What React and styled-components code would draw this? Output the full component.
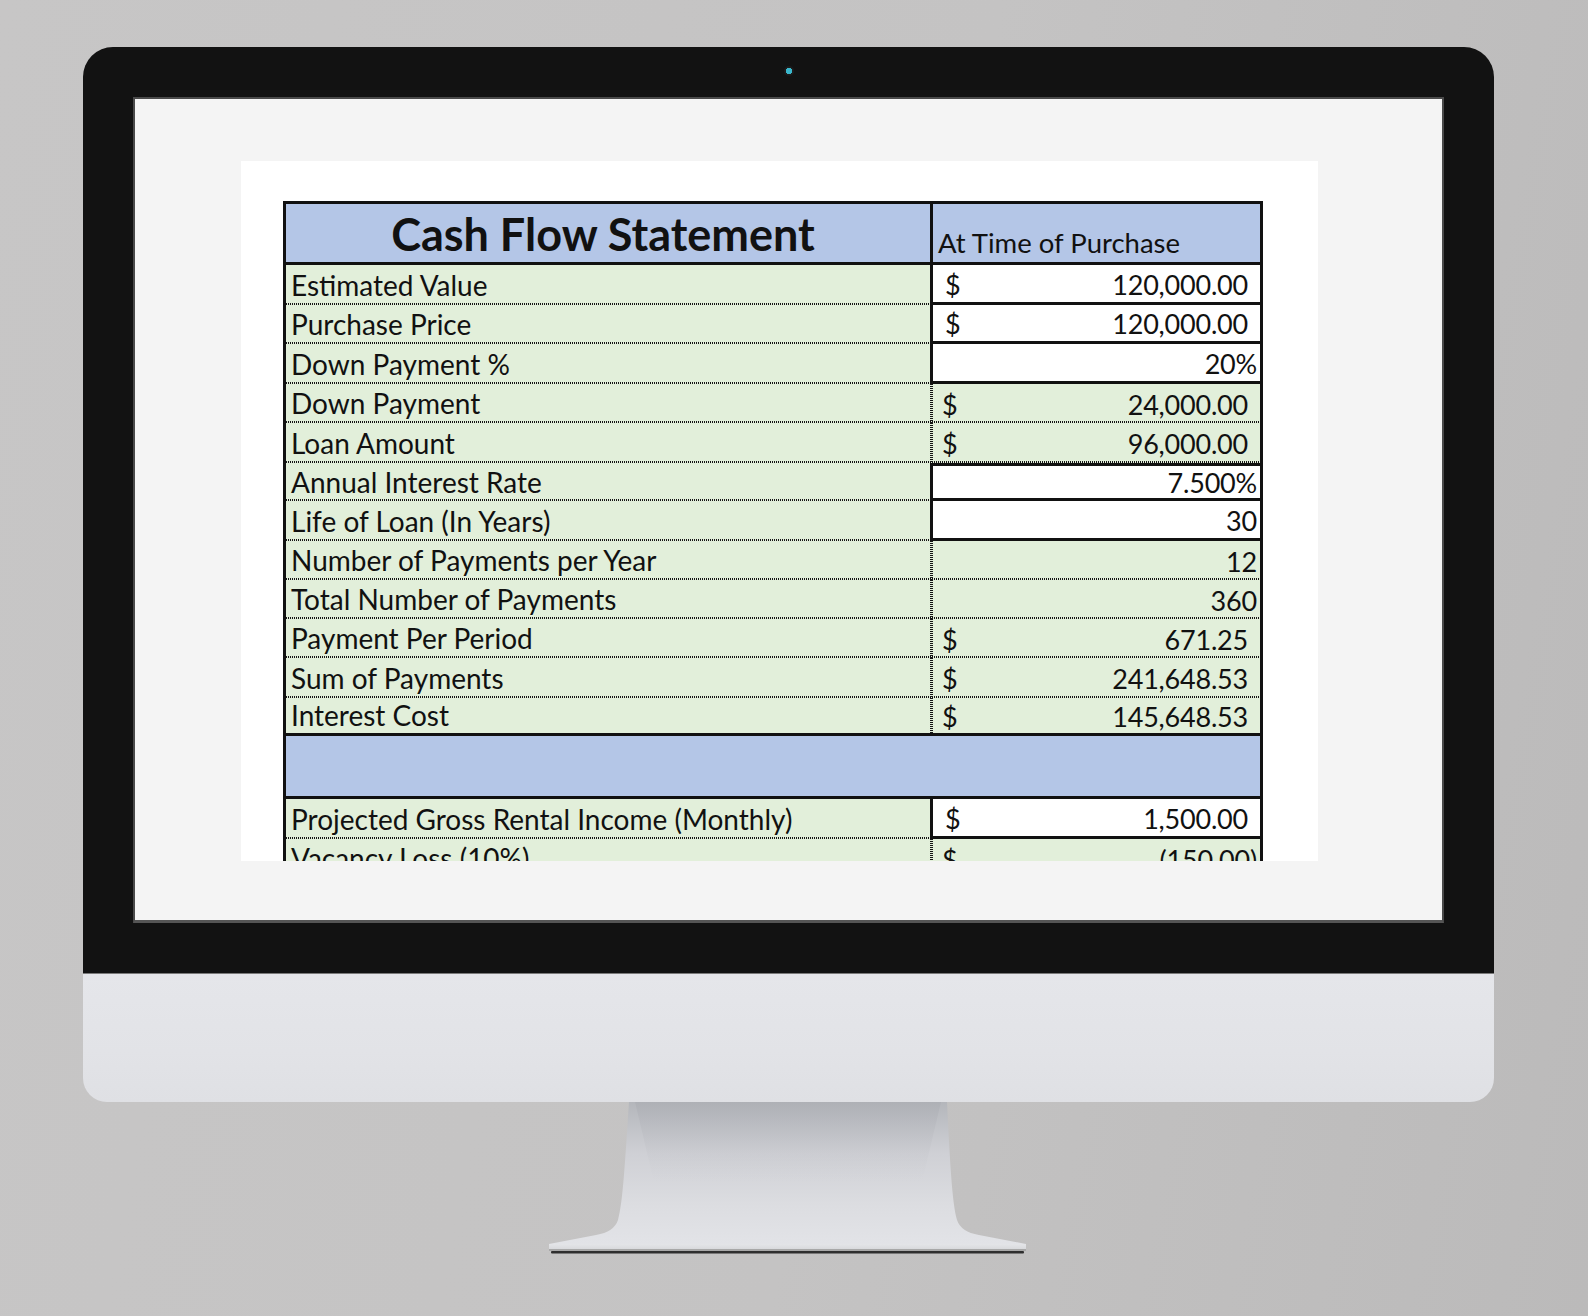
import React from "react";
import styled, { createGlobalStyle } from "styled-components";

const GlobalStyle = createGlobalStyle`
  html, body {
    margin: 0;
    padding: 0;
    background: #c3c2c2;
  }
`;

const Stage = styled.div`
  width: 1588px;
  height: 1316px;
  overflow: hidden;
  box-sizing: border-box;
  padding: 47px 0 0 83px;
  background: linear-gradient(100deg, #c7c6c6 0%, #c4c3c3 55%, #bbbaba 100%);
  font-family: Lato, "Liberation Sans", sans-serif;
`;

const Monitor = styled.div`
  width: 1411px;
  display: flex;
  flex-direction: column;
  align-items: center;
`;

const Bezel = styled.div`
  position: relative;
  width: 100%;
  box-sizing: border-box;
  padding: 50px;
  background: #121212;
  border-radius: 30px 30px 0 0;
`;

const Camera = styled.div`
  position: absolute;
  top: 19px;
  left: 50%;
  width: 10px;
  height: 10px;
  margin-left: -5px;
  border-radius: 50%;
  background: radial-gradient(circle, #3ab7cc 0 3px, #1c1c1c 3.5px);
`;

const Screen = styled.div`
  height: 826px;
  box-sizing: border-box;
  border: 2px solid #4a4a4a;
  border-bottom: 3px solid #555;
  background: #f4f4f4;
  padding: 62px 124px 0 106px;
`;

const Sheet = styled.div`
  height: 700px;
  overflow: hidden;
  background: #ffffff;
  box-sizing: border-box;
  padding: 40px 0 0 42px;
`;

const Table = styled.div`
  width: 980px;
  box-sizing: border-box;
  border: 3px solid #111;
  border-bottom: none;
  color: #111;
`;

const Row = styled.div`
  display: grid;
  grid-template-columns: 644px 1fr;
  grid-template-rows: ${(p) => p.$h}px;
  height: ${(p) => p.$h}px;
  line-height: 1.15;
`;

const hairH = "repeating-linear-gradient(90deg, #151515 0 1px, transparent 1px 2px) left bottom / 100% 2px no-repeat";
const hairV = "repeating-linear-gradient(180deg, #151515 0 1px, transparent 1px 2px) left top / 3px 100% no-repeat";

const TitleCell = styled.div`
  background: #b4c6e7;
  border-bottom: 3px solid #111;
  display: flex;
  align-items: center;
  justify-content: center;
  padding: 4px 10px 0 0;
  font-size: 45px;
  font-weight: 700;
`;

const HeadCell = styled.div`
  background: #b4c6e7;
  border-bottom: 3px solid #111;
  border-left: 3px solid #111;
  display: flex;
  align-items: flex-end;
  padding: 0 0 3px 5px;
  font-size: 27.5px;
`;

const Label = styled.div`
  box-sizing: border-box;
  min-height: 0;
  display: flex;
  align-items: center;
  padding: 0 0 0 5px;
  font-size: 28px;
  white-space: nowrap;
  background: ${(p) => (p.$last ? "#e2efda" : `${hairH}, #e2efda`)};
  border-bottom: ${(p) => (p.$last ? "3px solid #111" : "none")};
`;

const Value = styled.div`
  box-sizing: border-box;
  min-height: 0;
  display: flex;
  align-items: center;
  justify-content: ${(p) => (p.$money ? "space-between" : "flex-end")};
  padding: 2px ${(p) => (p.$money && !p.$paren ? 12 : 3)}px 0 12px;
  font-size: 27px;
  letter-spacing: -0.2px;
  white-space: nowrap;
  ${(p) =>
    p.$input
      ? `
    background: #ffffff;
    border-left: 3px solid #111;
    border-bottom: 3px solid #111;
    border-top: ${p.$top ? "3px solid #111" : "none"};
  `
      : `
    background: ${p.$last ? hairV : `${hairV}, ${hairH}`}, #e2efda;
    border-bottom: ${p.$last ? "3px solid #111" : "none"};
  `}
`;

const Band = styled.div`
  height: 63px;
  box-sizing: border-box;
  background: #b4c6e7;
  border-bottom: 3px solid #111;
`;

const Chin = styled.div`
  width: 100%;
  height: 129px;
  border-top: 1px solid #7a7a7a;
  box-sizing: border-box;
  background: linear-gradient(180deg, #e5e6ea 0%, #e2e3e7 60%, #dfe0e4 100%);
  border-radius: 0 0 24px 24px;
`;

const StandSvg = styled.svg`
  display: block;
  margin-left: -2px;
`;

const rowsTop = [
  { label: "Estimated Value", money: true, value: "120,000.00", input: true, h: 40 },
  { label: "Purchase Price", money: true, value: "120,000.00", input: true, h: 39 },
  { label: "Down Payment %", value: "20%", input: true, h: 40 },
  { label: "Down Payment", money: true, value: "24,000.00", h: 39 },
  { label: "Loan Amount", money: true, value: "96,000.00", h: 40 },
  { label: "Annual Interest Rate", value: "7.500%", input: true, top: true, h: 38 },
  { label: "Life of Loan (In Years)", value: "30", input: true, h: 40 },
  { label: "Number of Payments per Year", value: "12", h: 39 },
  { label: "Total Number of Payments", value: "360", h: 39 },
  { label: "Payment Per Period", money: true, value: "671.25", h: 39 },
  { label: "Sum of Payments", money: true, value: "241,648.53", h: 40 },
  { label: "Interest Cost", money: true, value: "145,648.53", last: true, h: 38 },
];

const rowsBottom = [
  { label: "Projected Gross Rental Income (Monthly)", money: true, value: "1,500.00", input: true, h: 40 },
  { label: "Vacancy Loss (10%)", money: true, value: "(150.00)", paren: true, h: 39 },
];

function SheetRow({ r }) {
  return (
    <Row $h={r.h}>
      <Label $last={r.last}>{r.label}</Label>
      <Value $money={r.money} $paren={r.paren} $input={r.input} $top={r.top} $last={r.last}>
        {r.money && <span>$</span>}
        <span>{r.value}</span>
      </Value>
    </Row>
  );
}

function Stand() {
  return (
    <StandSvg width="480" height="154" viewBox="0 0 480 154">
      <defs>
        <linearGradient id="neck" x1="0" y1="0" x2="0" y2="1">
          <stop offset="0" stopColor="#b4b6bb" />
          <stop offset="0.35" stopColor="#cfd0d5" />
          <stop offset="0.7" stopColor="#dcdde1" />
          <stop offset="1" stopColor="#e3e4e8" />
        </linearGradient>
        <linearGradient id="inner" x1="0" y1="0" x2="0" y2="1">
          <stop offset="0" stopColor="#a9abb1" stopOpacity="0.55" />
          <stop offset="1" stopColor="#c9cacf" stopOpacity="0" />
        </linearGradient>
        <linearGradient id="foot" x1="0" y1="0" x2="0" y2="1">
          <stop offset="0" stopColor="#e4e5e8" />
          <stop offset="1" stopColor="#d6d7da" />
        </linearGradient>
      </defs>
      <path
        d="M81,0 L399,0 C402,60 404,100 409,118 Q413,130 431,133 L478,142 L478,148 L1,148 L1,142 L48,133 Q66,130 70,118 C75,100 77,60 81,0 Z"
        fill="url(#neck)"
      />
      <path d="M87,0 L393,0 L374,80 L106,80 Z" fill="url(#inner)" />
      <path d="M1,142 L478,142 L478,148 L1,148 Z" fill="url(#foot)" />
      <rect x="1" y="147" width="477" height="2" fill="#a8a8a8" />
      <rect x="3" y="149" width="473" height="2.5" rx="1" fill="#2e2e2e" />
    </StandSvg>
  );
}

export default function App() {
  return (
    <>
      <GlobalStyle />
      <Stage>
        <Monitor>
          <Bezel>
            <Camera />
            <Screen>
              <Sheet>
                <Table>
                  <Row $h={61}>
                    <TitleCell>Cash Flow Statement</TitleCell>
                    <HeadCell>At Time of Purchase</HeadCell>
                  </Row>
                  {rowsTop.map((r) => (
                    <SheetRow key={r.label} r={r} />
                  ))}
                  <Band />
                  {rowsBottom.map((r) => (
                    <SheetRow key={r.label} r={r} />
                  ))}
                </Table>
              </Sheet>
            </Screen>
          </Bezel>
          <Chin />
          <Stand />
        </Monitor>
      </Stage>
    </>
  );
}
